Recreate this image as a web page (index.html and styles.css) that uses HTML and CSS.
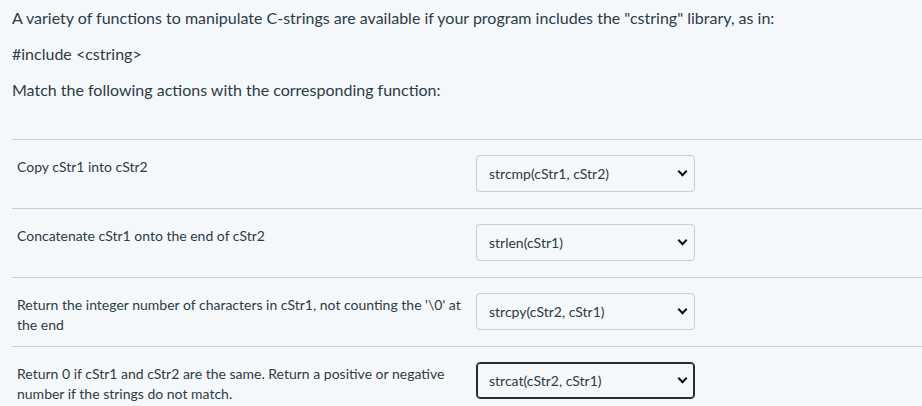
FILE: index.html
```html
<!DOCTYPE html>
<html lang="en">
<head>
    <meta charset="UTF-8">
    <title>Matching question</title>
    <link rel="stylesheet" href="styles.css">
</head>
<body>
    <div class="question">
        <div class="question-text">
            <p>A variety of functions to manipulate C-strings are available if your program includes the "cstring" library, as in:</p>
            <p>#include &lt;cstring&gt;</p>
            <p>Match the following actions with the corresponding function:</p>
        </div>

        <div class="answers">
            <div class="answer">
                <div class="answer-label">Copy cStr1 into cStr2</div>
                <span class="select-wrap">
                    <select class="answer-select">
                        <option>strcmp(cStr1, cStr2)</option>
                    </select>
                </span>
            </div>
            <div class="answer">
                <div class="answer-label">Concatenate cStr1 onto the end of cStr2</div>
                <span class="select-wrap">
                    <select class="answer-select">
                        <option>strlen(cStr1)</option>
                    </select>
                </span>
            </div>
            <div class="answer">
                <div class="answer-label">Return the integer number of characters in cStr1, not counting the '\0' at the end</div>
                <span class="select-wrap">
                    <select class="answer-select">
                        <option>strcpy(cStr2, cStr1)</option>
                    </select>
                </span>
            </div>
            <div class="answer">
                <div class="answer-label">Return 0 if cStr1 and cStr2 are the same. Return a positive or negative number if the strings do not match.</div>
                <span class="select-wrap">
                    <select class="answer-select is-focused">
                        <option>strcat(cStr2, cStr1)</option>
                    </select>
                </span>
            </div>
        </div>
    </div>
</body>
</html>
```

FILE: styles.css
```css
/* Quiz matching question */
body {
    margin: 0;
    background-color: #f5f8fb;
    color: #2d3b45;
    font-family: 'Lato', 'Noto Sans', sans-serif;
}
div.question {
    padding: 6px 0 0 12px;
}
div.question-text p {
    margin: 0 0 12px;
    font-size: 16px;
    line-height: 24px;
}
div.answers {
    margin-top: 37px;
}
div.answer {
    display: flex;
    align-items: flex-start;
    gap: 10px;
    border-top: 1px solid #c7cdd1;
    padding: 15px 0 11px 5px;
}
div.answer-label {
    width: 449px;
    padding-top: 2px;
    font-size: 14px;
    line-height: 20px;
}
span.select-wrap {
    position: relative;
    display: block;
    margin-bottom: 5px;
}
span.select-wrap::after {
    content: '';
    position: absolute;
    right: 9px;
    top: 13px;
    width: 5px;
    height: 5px;
    border-right: 2px solid #111;
    border-bottom: 2px solid #111;
    transform: rotate(45deg);
    pointer-events: none;
}
select.answer-select {
    -webkit-appearance: none;
    appearance: none;
    display: block;
    width: 219px;
    height: 37px;
    margin: 0;
    padding: 0 30px 0 12px;
    border: 1px solid #c7cdd1;
    border-radius: 4px;
    background-color: #f5f8fb;
    color: #2d3b45;
    font-family: 'Lato', 'Noto Sans', sans-serif;
    font-size: 14px;
}
select.answer-select.is-focused {
    border-color: #2b2b2b;
    box-shadow: inset 0 0 0 1px #2b2b2b;
}
```
